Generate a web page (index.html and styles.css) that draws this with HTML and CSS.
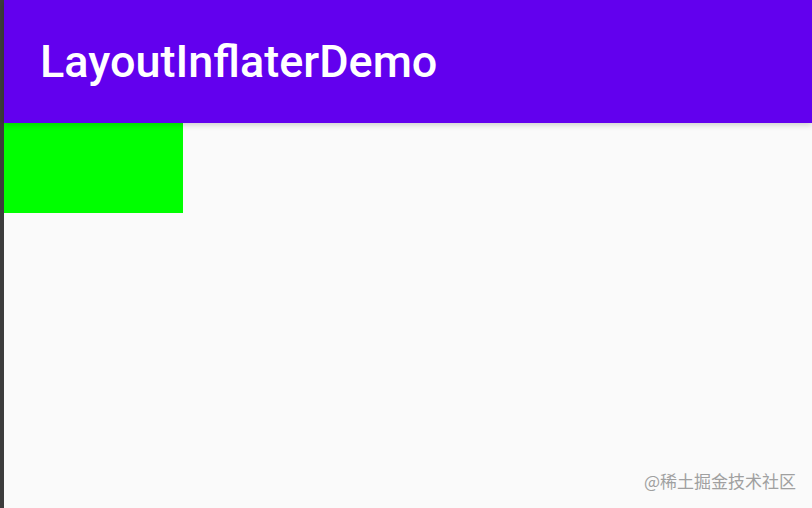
FILE: index.html
```html
<!DOCTYPE html>
<html lang="en">
<head>
  <meta charset="UTF-8">
  <title>LayoutInflaterDemo</title>
  <link rel="stylesheet" href="styles.css">
</head>
<body>
  <div class="edge"></div>
  <div class="screen">
    <div class="toolbar">
      <h1 class="title">LayoutInflaterDemo</h1>
    </div>
    <div class="content">
      <div class="box"></div>
    </div>
  </div>
  <div class="watermark">@稀土掘金技术社区</div>
</body>
</html>
```

FILE: styles.css
```css
* {
  margin: 0;
  padding: 0;
  box-sizing: border-box;
}

body {
  display: flex;
  width: 812px;
  height: 508px;
  overflow: hidden;
  background: #fafafa;
  font-family: Roboto, 'Noto Sans', sans-serif;
  position: relative;
}

.edge {
  width: 4px;
  background: #3c3c3c;
  flex-shrink: 0;
}

.screen {
  flex: 1;
  display: flex;
  flex-direction: column;
}

.toolbar {
  height: 123px;
  background: #6200ee;
  display: flex;
  align-items: center;
  padding-left: 36px;
  box-shadow: 0 2px 6px rgba(0, 0, 0, 0.18);
  position: relative;
  z-index: 1;
}

.title {
  color: #ffffff;
  font-size: 45px;
  font-weight: 500;
  letter-spacing: 0;
  margin-bottom: 1px;
}

.content {
  flex: 1;
}

.box {
  width: 179px;
  height: 90px;
  background: #00ff00;
}

.watermark {
  position: absolute;
  right: 16px;
  bottom: 15px;
  color: #a0a0a0;
  font-size: 17px;
  font-family: 'Noto Sans CJK SC', sans-serif;
}
```
